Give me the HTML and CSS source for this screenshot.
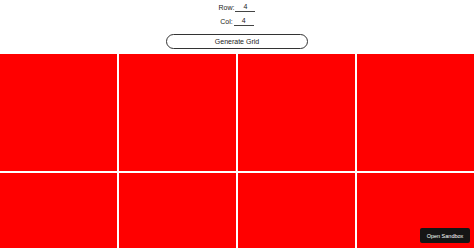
FILE: index.html
```html
<!DOCTYPE html>
<html>
<head>
<meta charset="utf-8">
<link rel="stylesheet" href="styles.css">
</head>
<body>
<div class="controls">
  <label class="field">Row: <input class="num" type="text" value="4"></label>
  <label class="field">Col: <input class="num" type="text" value="4"></label>
  <button class="gen">Generate Grid</button>
</div>
<div class="grid">
  <div class="cell"></div><div class="cell"></div><div class="cell"></div><div class="cell"></div>
  <div class="cell"></div><div class="cell"></div><div class="cell"></div><div class="cell"></div>
  <div class="cell"></div><div class="cell"></div><div class="cell"></div><div class="cell"></div>
  <div class="cell"></div><div class="cell"></div><div class="cell"></div><div class="cell"></div>
</div>
<a class="sandbox">Open Sandbox</a>
</body>
</html>
```
FILE: styles.css
```css
html, body {
  margin: 0;
  padding: 0;
  background: #fff;
  font-family: "Liberation Sans", Arial, sans-serif;
  overflow: hidden;
}
.controls {
  display: flex;
  flex-direction: column;
  align-items: center;
}
.field {
  display: flex;
  align-items: center;
  height: 14px;
  font-size: 7px;
  color: #222;
  gap: 1px;
}
.num {
  width: 20px;
  height: 9px;
  padding: 0;
  border: none;
  border-bottom: 1px solid #444;
  font: 7px "Liberation Sans", Arial, sans-serif;
  text-align: center;
  color: #222;
  outline: none;
  background: transparent;
}
.gen {
  margin-top: 6px;
  margin-bottom: 5px;
  width: 142px;
  height: 15px;
  border: 1px solid #333;
  border-radius: 8px;
  background: #fff;
  font: 7px "Liberation Sans", Arial, sans-serif;
  color: #222;
  padding: 0;
}
.grid {
  display: grid;
  grid-template-columns: repeat(4, 1fr);
  gap: 2px;
}
.cell {
  aspect-ratio: 1;
  background: #ff0000;
}
.sandbox {
  position: fixed;
  right: 4px;
  bottom: 5px;
  width: 50px;
  height: 15px;
  display: flex;
  align-items: center;
  justify-content: center;
  background: #151515;
  color: #fff;
  font-size: 5.5px;
  border-radius: 2px;
}
```
